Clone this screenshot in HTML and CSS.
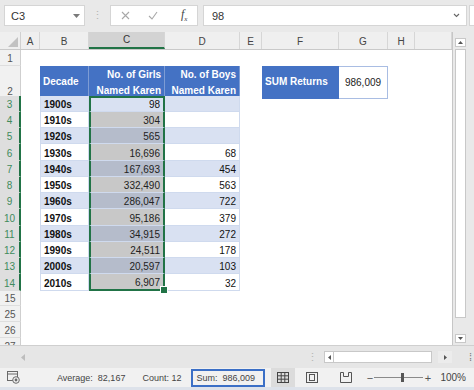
FILE: index.html
```html
<!DOCTYPE html>
<html>
<head>
    <title>SUM Returns</title>
    <link rel="stylesheet" href="styles.css">
</head>
<body>
<div class="window">
    <div class="formula-bar">
        <div class="name-box">
            <span>C3</span>
            <svg width="7" height="4" viewBox="0 0 7 4"><path d="M0 0h7L3.5 4z" fill="#7a7a7a"/></svg>
        </div>
        <div class="grip">&#8942;</div>
        <div class="fx-box">
            <svg width="9" height="9" viewBox="0 0 9 9"><path d="M1 1l7 7M8 1L1 8" stroke="#a8a8a8" stroke-width="1.1"/></svg>
            <svg width="10" height="9" viewBox="0 0 10 9"><path d="M1 5l3 3 5-7" fill="none" stroke="#a8a8a8" stroke-width="1.1"/></svg>
            <span class="fx">f<sub>x</sub></span>
        </div>
        <div class="formula-input">
            <span>98</span>
            <svg width="7" height="5" viewBox="0 0 7 5"><path d="M1 1l2.5 2.5L6 1" fill="none" stroke="#666" stroke-width="1.1"/></svg>
        </div>
        <div class="formula-tail"></div>
    </div>

    <div class="sheet-area">
        <div class="sheet">
            <div class="row col-heads">
                <div class="corner"><svg width="10" height="10" viewBox="0 0 10 10"><path d="M10 0V10H0z" fill="#c2c2c2"/></svg></div>
                <div class="ch">A</div>
                <div class="ch">B</div>
                <div class="ch sel-col">C</div>
                <div class="ch">D</div>
                <div class="ch">E</div>
                <div class="ch">F</div>
                <div class="ch">G</div>
                <div class="ch">H</div>
                <div class="ch"></div>
            </div>

            <div class="row h16"><div class="rh">1</div></div>

            <div class="row h30">
                <div class="rh">2</div>
                <div class="th cb decade">Decade</div>
                <div class="th cc num">No. of Girls<br>Named Karen</div>
                <div class="th cd num">No. of Boys<br>Named Karen</div>
                <div class="sum-label cf">SUM Returns</div>
                <div class="sum-value cg">986,009</div>
            </div>

            <div class="row h16 alt">
                <div class="rh sel-row">3</div>
                <div class="t cb yr">1900s</div>
                <div class="t cc num box box-top">98</div>
                <div class="t cd num"></div>
            </div>
            <div class="row h16">
                <div class="rh sel-row">4</div>
                <div class="t cb yr">1910s</div>
                <div class="t cc num box shade">304</div>
                <div class="t cd num"></div>
            </div>
            <div class="row h16 alt">
                <div class="rh sel-row">5</div>
                <div class="t cb yr">1920s</div>
                <div class="t cc num box shade">565</div>
                <div class="t cd num"></div>
            </div>
            <div class="row h17">
                <div class="rh sel-row">6</div>
                <div class="t cb yr">1930s</div>
                <div class="t cc num box shade">16,696</div>
                <div class="t cd num">68</div>
            </div>
            <div class="row h16 alt">
                <div class="rh sel-row">7</div>
                <div class="t cb yr">1940s</div>
                <div class="t cc num box shade">167,693</div>
                <div class="t cd num">454</div>
            </div>
            <div class="row h16">
                <div class="rh sel-row">8</div>
                <div class="t cb yr">1950s</div>
                <div class="t cc num box shade">332,490</div>
                <div class="t cd num">563</div>
            </div>
            <div class="row h16 alt">
                <div class="rh sel-row">9</div>
                <div class="t cb yr">1960s</div>
                <div class="t cc num box shade">286,047</div>
                <div class="t cd num">722</div>
            </div>
            <div class="row h17">
                <div class="rh sel-row">10</div>
                <div class="t cb yr">1970s</div>
                <div class="t cc num box shade">95,186</div>
                <div class="t cd num">379</div>
            </div>
            <div class="row h16 alt">
                <div class="rh sel-row">11</div>
                <div class="t cb yr">1980s</div>
                <div class="t cc num box shade">34,915</div>
                <div class="t cd num">272</div>
            </div>
            <div class="row h16">
                <div class="rh sel-row">12</div>
                <div class="t cb yr">1990s</div>
                <div class="t cc num box shade">24,511</div>
                <div class="t cd num">178</div>
            </div>
            <div class="row h16 alt">
                <div class="rh sel-row">13</div>
                <div class="t cb yr">2000s</div>
                <div class="t cc num box shade">20,597</div>
                <div class="t cd num">103</div>
            </div>
            <div class="row h17">
                <div class="rh sel-row">14</div>
                <div class="t cb yr">2010s</div>
                <div class="t cc num box shade box-bottom">6,907</div>
                <div class="t cd num">32</div>
            </div>

            <div class="row h15"><div class="rh">15</div></div>
            <div class="row h16"><div class="rh">25</div></div>
            <div class="row h16"><div class="rh">26</div></div>
            <div class="row h16"><div class="rh">27</div></div>
        </div>

        <div class="vscroll">
            <div class="arrow-box"><svg width="5" height="3" viewBox="0 0 5 3"><path d="M0 3h5L2.5 0z" fill="#555"/></svg></div>
            <div class="vthumb"></div>
            <div class="vtrack"></div>
            <div class="arrow-box"><svg width="5" height="3" viewBox="0 0 5 3"><path d="M0 0h5L2.5 3z" fill="#555"/></svg></div>
        </div>
    </div>

    <div class="hscroll">
        <svg class="tab-nav" width="4" height="7" viewBox="0 0 4 7"><path d="M4 0v7L0 3.5z" fill="#bdbdbd"/></svg>
        <div class="hspace"></div>
        <div class="hgrip">&#8942;</div>
        <div class="hbar">
            <div class="hleft"><svg width="3" height="5" viewBox="0 0 3 5"><path d="M3 0v5L0 2.5z" fill="#555"/></svg></div>
            <div class="hthumb"></div>
        </div>
        <div class="hright"><svg width="3" height="5" viewBox="0 0 3 5"><path d="M0 0v5L3 2.5z" fill="#555"/></svg></div>
        <div class="split">&#8286;</div>
    </div>

    <div class="status-bar">
        <svg class="macro" width="13" height="13" viewBox="0 0 13 13">
            <rect x="0.5" y="0.5" width="10" height="9" fill="none" stroke="#6a6a6a"/>
            <path d="M0.5 3h10" stroke="#6a6a6a"/>
            <circle cx="9" cy="9" r="3.3" fill="#f1f1f1" stroke="#6a6a6a"/>
            <circle cx="9" cy="9" r="1.4" fill="#6a6a6a"/>
        </svg>
        <span class="stat avg">Average:&nbsp; 82,167</span>
        <span class="stat count">Count: 12</span>
        <span class="stat sum">Sum:&nbsp; 986,009</span>
        <div class="view active-view">
            <svg width="12" height="11" viewBox="0 0 12 11"><rect x=".5" y=".5" width="11" height="10" fill="none" stroke="#444"/><path d="M4.2 .5v10M7.8 .5v10M.5 3.8h11M.5 7.2h11" stroke="#444"/></svg>
        </div>
        <div class="view layout-view">
            <svg width="12" height="11" viewBox="0 0 12 11"><rect x=".5" y=".5" width="11" height="10" fill="none" stroke="#555"/><rect x="3.5" y="2.5" width="5" height="6" fill="none" stroke="#555"/></svg>
        </div>
        <div class="view">
            <svg width="12" height="11" viewBox="0 0 12 11"><path d="M.5 .5h3v4h5v-4h3v10h-11z" fill="none" stroke="#555"/></svg>
        </div>
        <div class="zoom">
            <span class="zsign">&minus;</span>
            <div class="slider"><div class="knob"></div></div>
            <span class="zsign">+</span>
            <span class="zpct">100%</span>
        </div>
    </div>
    <div class="taskbar"></div>
</div>
</body>
</html>
```

FILE: styles.css
```css
* {
    margin: 0;
    padding: 0;
    box-sizing: border-box;
}

body {
    width: 474px;
    height: 390px;
    overflow: hidden;
    font-family: "Liberation Sans", Arial, sans-serif;
    background: #e9e9e9;
    color: #222;
}

.window {
    height: 390px;
    display: flex;
    flex-direction: column;
}

/* formula bar */
.formula-bar {
    height: 32px;
    flex-shrink: 0;
    display: flex;
    align-items: flex-start;
    padding: 5px 0 0 4px;
    background: #e9e9e9;
}

.name-box {
    width: 81px;
    height: 21px;
    background: #fff;
    border: 1px solid #d5d5d5;
    display: flex;
    align-items: center;
    justify-content: space-between;
    padding: 0 4px 0 6px;
    font-size: 11px;
    color: #333;
}

.grip {
    width: 25px;
    text-align: center;
    line-height: 21px;
    font-size: 11px;
    color: #b5b5b5;
}

.fx-box {
    width: 88px;
    height: 21px;
    background: #fff;
    border: 1px solid #d5d5d5;
    display: flex;
    align-items: center;
    padding-left: 10px;
    gap: 18px;
}

.fx {
    font-family: "Liberation Serif", serif;
    font-style: italic;
    font-size: 12px;
    color: #444;
    margin-left: 5px;
}

.fx sub {
    font-size: 7px;
}

.formula-input {
    margin-left: 5px;
    width: 264px;
    height: 21px;
    background: #fff;
    border: 1px solid #d5d5d5;
    display: flex;
    align-items: center;
    justify-content: space-between;
    padding: 0 6px 0 8px;
    font-size: 11px;
    color: #333;
}

.formula-tail {
    margin-left: 2px;
    flex: 1;
    height: 21px;
    background: #fff;
    border: 1px solid #d5d5d5;
    border-right: none;
}

/* sheet */
.sheet-area {
    height: 313px;
    flex-shrink: 0;
    display: flex;
}

.sheet {
    width: 452px;
    overflow: hidden;
    background: #fff;
}

.row {
    display: grid;
    grid-template-columns: 21px 19px 49px 76px 75px 22px 77px 49px 27px 37px;
    font-size: 10px;
}

.h15 { height: 15px; }
.h16 { height: 16px; }
.h17 { height: 17px; }
.h30 { height: 30px; }

.col-heads {
    height: 18px;
    background: #efefef;
    border-bottom: 1px solid #c9c9c9;
}

.corner {
    display: flex;
    align-items: flex-end;
    justify-content: flex-end;
    padding: 0 2px 2px 0;
    border-right: 1px solid #d0d0d0;
}

.ch {
    display: flex;
    align-items: flex-end;
    justify-content: center;
    line-height: 12px;
    padding-bottom: 1px;
    color: #444;
    border-right: 1px solid #d6d6d6;
}

.ch.sel-col {
    background: #d3d3d3;
    border-bottom: 2px solid #217346;
    color: #333;
}

.rh {
    grid-column: 1;
    display: flex;
    align-items: flex-end;
    justify-content: center;
    line-height: 12px;
    color: #555;
    background: #f1f1f1;
    border-right: 1px solid #cfcfcf;
    border-bottom: 1px solid #dedede;
}

.rh.sel-row {
    background: #dedede;
    color: #3f8a5c;
    border-right: 2px solid #217346;
}

.cb { grid-column: 3; }
.cc { grid-column: 4; }
.cd { grid-column: 5; }
.cf { grid-column: 7; }
.cg { grid-column: 8; }

/* table header */
.th {
    display: flex;
    align-items: flex-start;
    padding: 1px 3px 0 3px;
    line-height: 16px;
    background: #4472c4;
    color: #fff;
    font-weight: bold;
    border-right: 1px solid #7d9cd4;
}

.th.num {
    justify-content: flex-end;
    text-align: right;
}

.th.decade {
    padding-top: 8px;
}

.sum-label {
    display: flex;
    align-items: flex-start;
    padding: 8px 3px 0 3px;
    line-height: 16px;
    background: #4472c4;
    color: #fff;
    font-weight: bold;
}

.sum-value {
    display: flex;
    align-items: flex-start;
    justify-content: center;
    padding-top: 8px;
    line-height: 16px;
    border: 1px solid #a9bde3;
    border-left: none;
}

/* table body */
.t {
    display: flex;
    align-items: flex-end;
    padding: 0 3px;
    line-height: 12px;
    background: #fff;
    color: #111;
    border-right: 1px solid #cfdaee;
    border-bottom: 1px solid #cfdaee;
}

.t.cb {
    border-left: 1px solid #cfdaee;
}

.alt .t {
    background: #d9e1f2;
}

.t.num {
    justify-content: flex-end;
}

.yr {
    font-weight: bold;
}

.t.shade {
    background: #c8c8c8;
    color: #222;
}

.alt .t.shade {
    background: #b5bccb;
}

.t.box {
    border-left: 2px solid #217346;
    border-right: 2px solid #217346;
}

.t.box-top {
    border-top: 2px solid #217346;
}

.t.box-bottom {
    position: relative;
    border-bottom: 2px solid #217346;
}

.t.box-bottom::after {
    content: '';
    position: absolute;
    right: -5px;
    bottom: -5px;
    width: 6px;
    height: 6px;
    background: #217346;
    border: 1px solid #fff;
}

/* vertical scroll */
.vscroll {
    flex: 1;
    display: flex;
    flex-direction: column;
    padding: 6px 0 2px 2px;
    background: #e9e9e9;
    border-left: 1px solid #c6c6c6;
}

.arrow-box {
    width: 11px;
    height: 9px;
    background: #fff;
    border: 1px solid #c8c8c8;
    display: flex;
    align-items: center;
    justify-content: center;
}

.vthumb {
    width: 11px;
    height: 269px;
    margin-top: 2px;
    background: #fff;
    border: 1px solid #c8c8c8;
}

.vtrack {
    flex: 1;
}

/* horizontal scroll */
.hscroll {
    height: 23px;
    flex-shrink: 0;
    display: flex;
    align-items: center;
    background: #e6e6e6;
    border-top: 1px solid #cfcfcf;
}

.tab-nav {
    margin-left: 21px;
}

.hspace {
    flex: 1;
}

.hgrip {
    width: 5px;
    font-size: 11px;
    color: #b5b5b5;
    text-align: center;
}

.hbar {
    margin-left: 12px;
    width: 108px;
    height: 12px;
    display: flex;
    background: #fff;
    border: 1px solid #c8c8c8;
}

.hleft {
    width: 9px;
    display: flex;
    align-items: center;
    justify-content: center;
    border-right: 1px solid #c8c8c8;
}

.hthumb {
    flex: 1;
}

.hright {
    margin-left: 6px;
    width: 14px;
    height: 12px;
    display: flex;
    align-items: center;
    justify-content: center;
    background: #ececec;
}

.split {
    width: 22px;
    text-align: right;
    padding-right: 2px;
    font-size: 11px;
    color: #7a7a7a;
}

/* status bar */
.status-bar {
    height: 19px;
    flex-shrink: 0;
    display: flex;
    align-items: center;
    background: #f1f1f1;
    font-size: 9px;
    color: #444;
    white-space: nowrap;
}

.stat,
.view,
.zoom,
.macro {
    flex-shrink: 0;
}

.macro {
    margin-left: 7px;
}

.stat.avg {
    margin-left: 37px;
}

.stat.count {
    margin-left: 17px;
}

.stat.sum {
    margin-left: 10px;
    width: 74px;
    height: 18px;
    line-height: 14px;
    padding-left: 3px;
    border: 2px solid #3b6fc6;
    overflow: hidden;
}

.view {
    width: 20px;
    height: 19px;
    margin-left: 14px;
    display: flex;
    align-items: center;
    justify-content: center;
}

.view.active-view {
    width: 24px;
    margin-left: 6px;
    background: #dcdcdc;
}

.view.layout-view {
    margin-left: 7px;
}

.zoom {
    display: flex;
    align-items: center;
    margin-left: 9px;
}

.zsign {
    width: 9px;
    text-align: center;
    font-size: 11px;
    color: #555;
}

.slider {
    width: 49px;
    height: 9px;
    display: flex;
    align-items: center;
    padding-left: 27px;
    background: linear-gradient(#8a8a8a, #8a8a8a) center / 100% 1px no-repeat;
}

.knob {
    width: 3px;
    height: 9px;
    background: #555;
}

.zpct {
    margin-left: 8px;
    font-size: 10px;
}

.taskbar {
    flex: 1;
    background: #dde2ea;
}
```
